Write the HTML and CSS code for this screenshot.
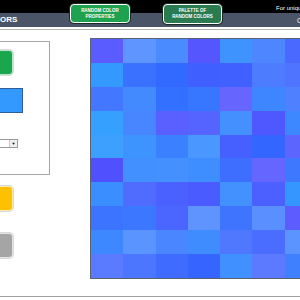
FILE: index.html
```html
<!DOCTYPE html>
<html lang="en">
<head>
    <meta charset="UTF-8">
    <title>Random Colors</title>
    <link rel="stylesheet" href="styles.css">
</head>
<body>
    <div class="header">
        <div class="title">ORS</div>
        <div class="tab tab-light">RANDOM COLOR<br>PROPERTIES</div>
        <div class="tab tab-dark">PALETTE OF<br>RANDOM COLORS</div>
        <div class="info">
            <div class="info-top">For unique</div>
            <div class="info-bottom">C</div>
        </div>
    </div>
    <div class="rule"></div>

    <div class="main">
        <div class="side">
            <div class="panel">
                <div class="chip chip-green"></div>
                <div class="swatch"></div>
                <div class="dropdown"><span class="arrow">&#9660;</span></div>
            </div>
            <div class="chip chip-yellow chip-out"></div>
            <div class="chip chip-gray chip-out"></div>
        </div>

        <!-- palette grid, 10 rows -->
        <div class="grid">
            <div style="background:#5a5cff"></div><div style="background:#5e95ff"></div><div style="background:#4a8cff"></div><div style="background:#5656ff"></div><div style="background:#3f93ff"></div><div style="background:#4d86ff"></div><div style="background:#4a6aff"></div>
            <div style="background:#3399ff"></div><div style="background:#3a72ff"></div><div style="background:#3269ff"></div><div style="background:#3f60ff"></div><div style="background:#4060ff"></div><div style="background:#4d7cff"></div><div style="background:#4f74ff"></div>
            <div style="background:#4477ff"></div><div style="background:#4389ff"></div><div style="background:#3370ff"></div><div style="background:#3776ff"></div><div style="background:#6666ff"></div><div style="background:#3d86ff"></div><div style="background:#4f80ff"></div>
            <div style="background:#36a0ff"></div><div style="background:#4786ff"></div><div style="background:#5a60ff"></div><div style="background:#5664ff"></div><div style="background:#4490ff"></div><div style="background:#4f58ff"></div><div style="background:#3e88ff"></div>
            <div style="background:#3da0ff"></div><div style="background:#3d94ff"></div><div style="background:#3b80ff"></div><div style="background:#4a98ff"></div><div style="background:#4560ff"></div><div style="background:#3366ff"></div><div style="background:#5c66ff"></div>
            <div style="background:#5050ff"></div><div style="background:#4290ff"></div><div style="background:#4590ff"></div><div style="background:#3f8eff"></div><div style="background:#3e6eff"></div><div style="background:#6466ff"></div><div style="background:#3e78ff"></div>
            <div style="background:#3a8eff"></div><div style="background:#4f6cff"></div><div style="background:#4a60ff"></div><div style="background:#4a5cff"></div><div style="background:#4390ff"></div><div style="background:#4c60ff"></div><div style="background:#3696ff"></div>
            <div style="background:#3d74ff"></div><div style="background:#3c78ff"></div><div style="background:#4a66ff"></div><div style="background:#5f94ff"></div><div style="background:#3f74ff"></div><div style="background:#5a8fff"></div><div style="background:#5c5cff"></div>
            <div style="background:#3d88ff"></div><div style="background:#5a94ff"></div><div style="background:#4a86ff"></div><div style="background:#3f8cff"></div><div style="background:#4f78ff"></div><div style="background:#4a6cff"></div><div style="background:#5b94ff"></div>
            <div style="background:#5a7aff"></div><div style="background:#4d76ff"></div><div style="background:#3f6cff"></div><div style="background:#3564ff"></div><div style="background:#4090ff"></div><div style="background:#5c7aff"></div><div style="background:#3f80ff"></div>
        </div>
    </div>
</body>
</html>
```

FILE: styles.css
```css
body {
    margin: 0;
    width: 300px;
    height: 300px;
    overflow: hidden;
    background-color: #FFFFFF;
    font-family: "Liberation Sans", Arial, sans-serif;
}
/* Header: black strip over slate bar */
.header {
    display: flex;
    align-items: flex-start;
    height: 27px;
    overflow: hidden;
    background: linear-gradient(#000000 0, #000000 13px, #4b5568 13px, #4b5568 100%);
    color: #FFFFFF;
    white-space: nowrap;
}
.title {
    width: 70px;
    flex-shrink: 0;
    padding-top: 16px;
    font-size: 8px;
    font-weight: bold;
    line-height: 8px;
}
.tab {
    flex-shrink: 0;
    margin-top: 4px;
    height: 19px;
    box-sizing: border-box;
    border: 1px solid #FFFFFF;
    border-radius: 4px;
    box-shadow: 0 0 0 1px #1c2a24;
    font-size: 4.5px;
    font-weight: bold;
    line-height: 5.5px;
    text-align: center;
    padding-top: 3px;
}
.tab-light {
    width: 60px;
    background-color: #1fa24f;
}
.tab-dark {
    width: 59px;
    margin-left: 33px;
    height: 20px;
    background-color: #2b7b50;
}
.info {
    flex-shrink: 0;
    margin-left: 54px;
    font-size: 6px;
}
.info-top {
    padding-top: 5px;
    line-height: 7px;
}
.info-bottom {
    margin-left: 21px;
    margin-top: 5px;
    font-size: 7px;
    line-height: 7px;
}
.rule {
    margin-top: 2px;
    border-top: 1px solid #b4b4b4;
}
/* Main area */
.main {
    display: flex;
    align-items: flex-start;
    height: 267px;
    overflow: hidden;
    box-sizing: border-box;
    border-bottom: 1px solid #a0a0a0;
}
.side {
    width: 50px;
    flex-shrink: 0;
    margin-top: 11px;
    display: flex;
    flex-direction: column;
}
.panel {
    margin-left: -10px;
    width: 60px;
    height: 134px;
    box-sizing: border-box;
    border: 1px solid #a6a6a6;
    padding-top: 8px;
}
.chip {
    height: 25px;
    box-sizing: border-box;
    border-radius: 4px;
    border: 1px solid rgba(255, 255, 255, 0.7);
    box-shadow: 0 0 0 1px #d8d8d8;
}
.chip-green {
    width: 22px;
    background-color: #19a64d;
}
.chip-out {
    margin-left: -20px;
    width: 33px;
}
.chip-yellow {
    margin-top: 11px;
    background-color: #ffc000;
}
.chip-gray {
    margin-top: 22px;
    background-color: #a5a5a5;
}
.swatch {
    margin-top: 13px;
    width: 32px;
    height: 25px;
    box-sizing: border-box;
    border: 1px solid #2f5d99;
    background-color: #3399ff;
}
.dropdown {
    margin-top: 26px;
    width: 27px;
    height: 9px;
    box-sizing: border-box;
    border: 1px solid #9a9a9a;
    background-color: #FFFFFF;
    display: flex;
    justify-content: flex-end;
}
.arrow {
    width: 7px;
    border-left: 1px solid #c8c8c8;
    background-color: #f0f0f0;
    font-size: 4px;
    line-height: 7px;
    text-align: center;
    color: #000000;
}
.grid {
    margin-left: 40px;
    margin-top: 8px;
    display: grid;
    grid-template-columns: repeat(7, 32.3px);
    grid-template-rows: repeat(10, 23.9px);
    border: 1px solid #5b6270;
    flex-shrink: 0;
}
```
